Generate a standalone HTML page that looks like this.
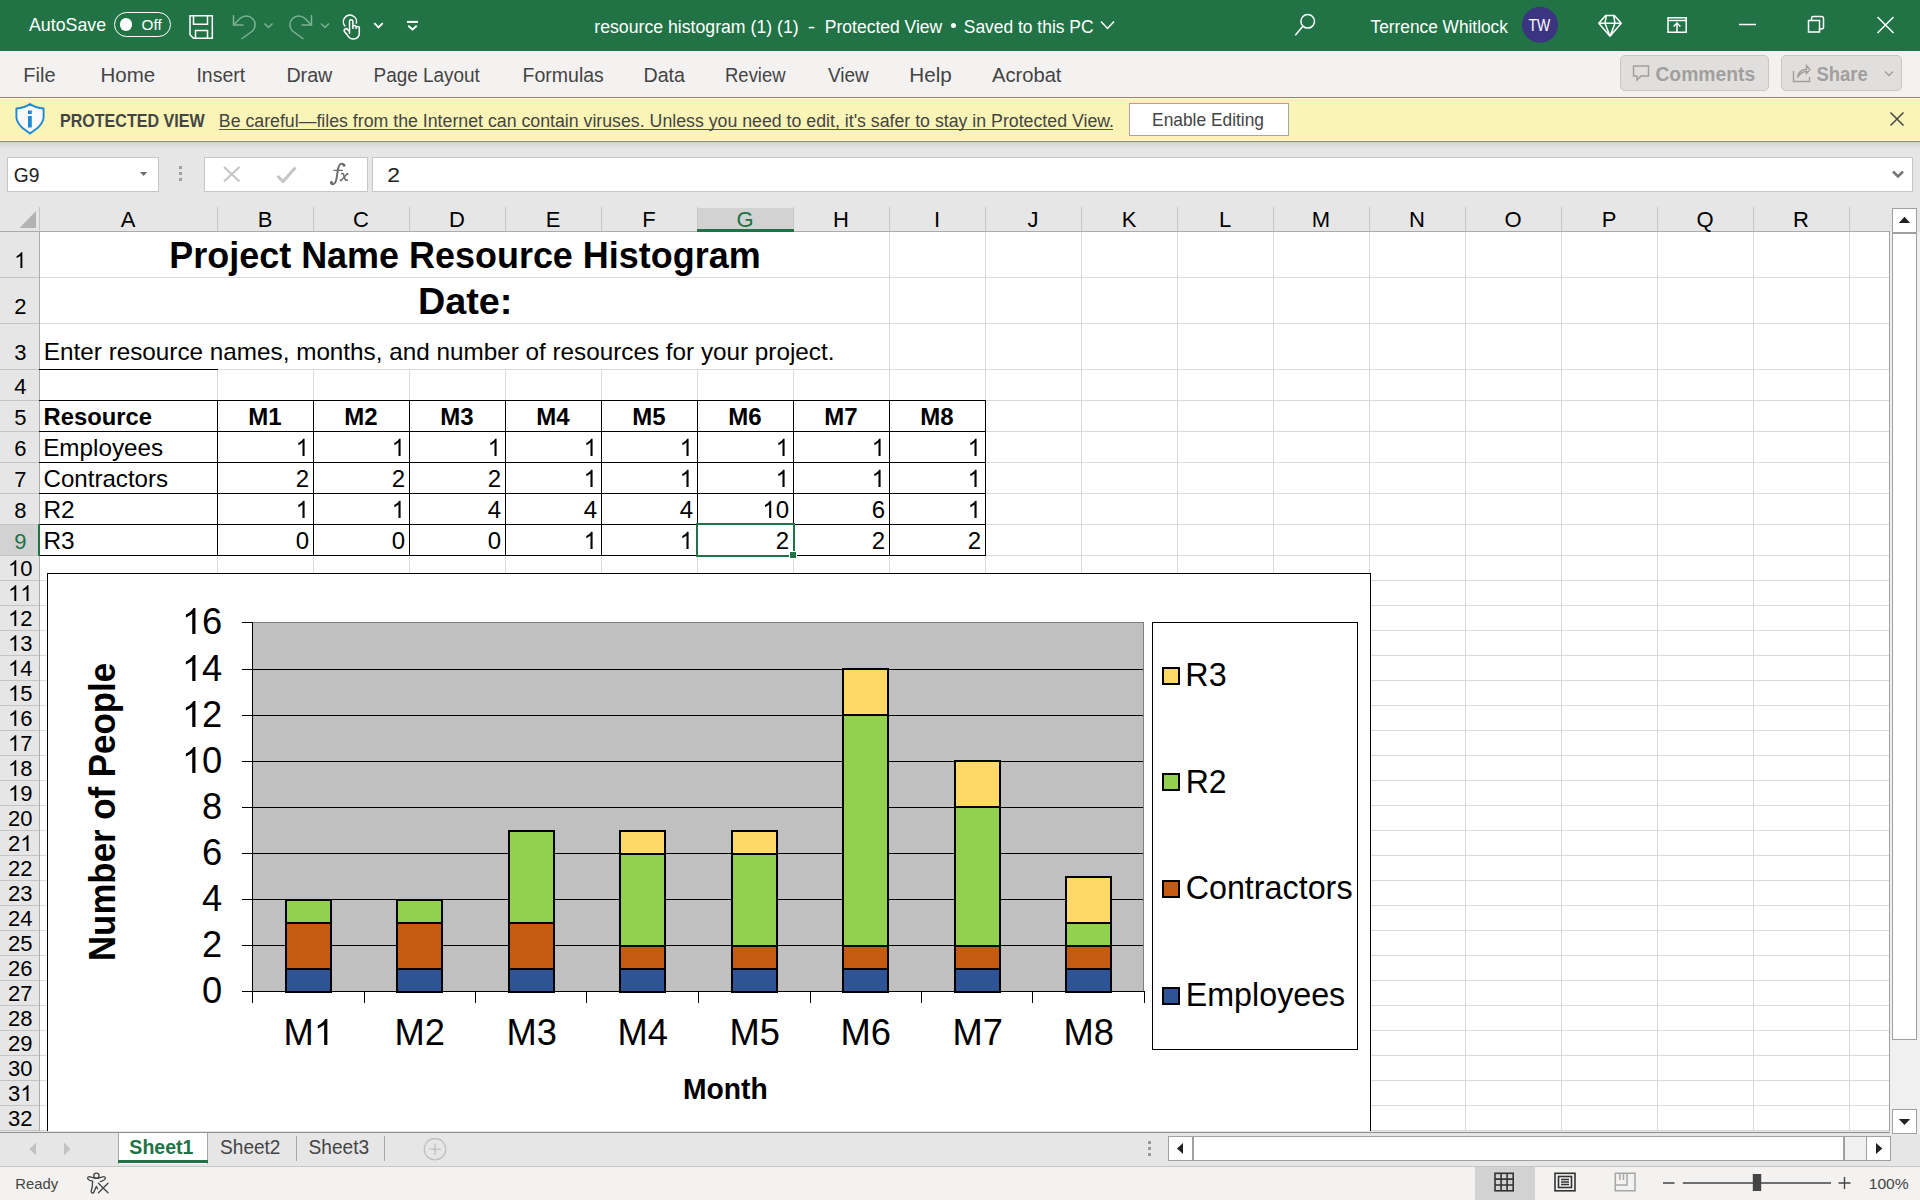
<!DOCTYPE html><html><head><meta charset="utf-8"><title>resource histogram</title><style>*{margin:0;padding:0;box-sizing:border-box}
html,body{width:1920px;height:1200px;overflow:hidden;background:#fff;font-family:"Liberation Sans",sans-serif}
.a{position:absolute}
svg text{font-family:"Liberation Sans",sans-serif}</style></head><body>
<div class="a" style="left:0;top:0;width:1920px;height:51px;background:#217346"></div>
<div class="a" style="left:114px;top:12px;width:57px;height:25px;border:1.3px solid #fff;border-radius:13px"></div>
<div class="a" style="left:119.5px;top:18px;width:12.5px;height:12.5px;background:#fff;border-radius:50%"></div>
<svg class="a" style="left:0;top:0" width="440" height="51" viewBox="0 0 440 51">
<g fill="none" stroke="#fff" stroke-width="1.5">
<path d="M190 15.7 H212.3 V38.3 H193.5 L190 34.8 Z"/>
<path d="M193.5 15.7 V24.3 H207.5 V15.7"/>
<path d="M195.5 38.3 V30.5 H207.5 V38.3"/>
</g>
<g fill="none" stroke="#7db393" stroke-width="1.5">
<path d="M233.5 15 V25 H243.5"/><path d="M233.5 25 L240 18.5 A8.8 8.8 0 0 1 252.5 31 L241.5 39"/>
<path d="M264.5 23.5 L268.5 27.5 L272.5 23.5"/>
<path d="M311.5 15 V25 H301.5"/><path d="M311.5 25 L305 18.5 A8.8 8.8 0 0 0 292.5 31 L303.5 39"/>
<path d="M321 23.5 L325 27.5 L329 23.5"/>
</g>
<g fill="none" stroke="#fff" stroke-width="1.5">
<path d="M345.3 26.4 A6.6 6.6 0 1 1 356.3 23.6"/>
<path d="M349.5 34 V21.5 A1.7 1.7 0 0 1 352.9 21.5 V29 M352.9 27 A1.6 1.6 0 0 1 356.1 27 V29 M356.1 28 A1.6 1.6 0 0 1 359.3 28 V33.5 A5.5 5.5 0 0 1 353.8 39 A6 6 0 0 1 348 36 L344.5 31.5 A1.6 1.6 0 0 1 347.5 29.5 L349.5 31.5"/>
<path d="M374.3 23.2 L378.5 27.4 L382.7 23.2" stroke-width="1.9"/>
<path d="M407 21.9 H418" stroke-width="2"/><path d="M408.3 25.7 L412.5 29.5 L416.7 25.7" stroke-width="1.9"/>
</g>
</svg>
<div class="a" style="left:951.3px;top:22.8px;width:5px;height:5px;background:#fff;border-radius:50%"></div>
<svg class="a" style="left:1090px;top:0" width="830" height="51" viewBox="1090 0 830 51">
<g fill="none" stroke="#fff" stroke-width="1.5">
<path d="M1101 21.5 L1107.5 28.5 L1114 21.5"/>
<circle cx="1307.7" cy="21.3" r="6.8"/><path d="M1302.8 26.3 L1295.3 35.3"/>
<path d="M1598.8 23.2 L1605.6 15.6 H1614.4 L1621.2 23.2 L1610 36.3 Z M1598.8 23.2 H1621.2 M1606.3 15.6 L1605 23.2 L1610 36.3 L1615 23.2 L1613.7 15.6" stroke-linejoin="round"/>
<path d="M1668 17.8 H1686.2 V32.2 H1668 Z M1668 20.5 H1686.2 M1677 32 V23.2 M1673.6 26.5 L1677 23 L1680.4 26.5"/>
<path d="M1739 24.5 H1756"/>
<path d="M1808.5 20.5 H1819.5 V32 H1808.5 Z M1811.5 20.5 V18.5 A2 2 0 0 1 1813.5 16.5 H1821.5 A2 2 0 0 1 1823.5 18.5 V27 A2 2 0 0 1 1821.5 29 H1819.5"/>
<path d="M1877.5 17 L1893.5 33 M1893.5 17 L1877.5 33"/>
</g>
<circle cx="1540" cy="24.8" r="18" fill="#3b3480"/>
</svg>
<div class="a" style="left:0;top:51px;width:1920px;height:46px;background:#f3f2f1"></div>
<div class="a" style="left:1620px;top:55px;width:149px;height:36px;border:1px solid #c8c6c4;border-radius:5px;background:#e1dfdd"></div>
<div class="a" style="left:1781px;top:55px;width:121px;height:36px;border:1px solid #c8c6c4;border-radius:5px;background:#e1dfdd"></div>
<svg class="a" style="left:1620px;top:51px" width="300" height="46" viewBox="1620 51 300 46">
<g fill="none" stroke="#a19f9d" stroke-width="1.4">
<path d="M1633.5 66 H1648.5 V76 H1641 L1637 80 V76 H1633.5 Z"/>
<path d="M1793.5 71 V81.5 H1809.5 V77 M1797.5 77.5 Q1799 69.5 1805.5 69.5 H1806.5 V65.5 L1810 69.5 L1806.5 73.5 V71.5 Q1801 71.5 1797.5 77.5"/>
<path d="M1885 71.5 L1889 75.5 L1893 71.5"/>
</g></svg>
<div class="a" style="left:0;top:97px;width:1920px;height:45px;background:#faf5b7;border-top:1px solid #b48c06;border-bottom:1px solid #b48c06;box-shadow:inset 0 1px #fffbca,inset 0 -1px #fffbca"></div>
<svg class="a" style="left:10px;top:100px" width="40" height="40" viewBox="10 100 40 40">
<path d="M30 104 Q32.5 105.8 36 107 Q40 108.2 43.6 108.5 V117.5 Q43.2 122.5 37.5 128 L30 133.6 L22.5 128 Q16.8 122.5 16.4 117.5 V108.5 Q20 108.2 24 107 Q27.5 105.8 30 104 Z" fill="#f9f9fb" stroke="#1e88d4" stroke-width="1.9" stroke-linejoin="round"/>
<rect x="28" y="110.5" width="3.8" height="3.6" fill="#1e8ad6"/><rect x="28" y="116" width="3.8" height="11.5" fill="#1e8ad6"/>
</svg>
<div class="a" style="left:219px;top:128.5px;width:894px;height:1.3px;background:#555"></div>
<div class="a" style="left:1129px;top:103px;width:160px;height:33px;background:#fff;border:1px solid #a6a6a6"></div>
<svg class="a" style="left:1880px;top:104px" width="30" height="30" viewBox="1880 104 30 30"><path d="M1890.5 112.5 L1903.5 125.5 M1903.5 112.5 L1890.5 125.5" stroke="#444" stroke-width="1.5"/></svg>
<div class="a" style="left:0;top:142px;width:1920px;height:90px;background:#e6e6e6"></div>
<div class="a" style="left:0;top:142px;width:1920px;height:7px;background:linear-gradient(#d2d2d6,#e6e6e6)"></div>
<div class="a" style="left:7px;top:157px;width:152px;height:35px;background:#fff;border:1px solid #c6c6c6"></div>
<svg class="a" style="left:136px;top:168px" width="16" height="10" viewBox="136 168 16 10"><path d="M140 172 H147.2 L143.6 175.9 Z" fill="#6e6e6e"/></svg>
<div class="a" style="left:179px;top:166px;width:3px;height:3px;background:#a0a0a0"></div>
<div class="a" style="left:179px;top:172px;width:3px;height:3px;background:#a0a0a0"></div>
<div class="a" style="left:179px;top:178px;width:3px;height:3px;background:#a0a0a0"></div>
<div class="a" style="left:204px;top:157px;width:164px;height:35px;background:#fff;border:1px solid #c6c6c6"></div>
<svg class="a" style="left:204px;top:157px" width="164" height="35" viewBox="204 157 164 35"><path d="M224 167 L239.5 181.5 M239.5 167 L224 181.5" stroke="#c6c6c6" stroke-width="2.2"/><path d="M277.5 176 L283 181.5 L295.5 167.5" fill="none" stroke="#c6c6c6" stroke-width="3"/></svg>
<svg class="a" style="left:326px;top:158px" width="28" height="32" viewBox="326 158 28 32">
<g fill="none" stroke="#6b6b6b" stroke-linecap="round">
<path d="M344.6 165.3 Q343.2 163.3 341 163.9 Q338.7 164.9 338 169.5 L336.4 179.2 Q335.5 184.2 332.4 184.3 Q330.9 184.1 331.1 182.6" stroke-width="1.9"/>
<path d="M334 170.4 H342.4" stroke-width="1.3"/>
<path d="M341.9 173.6 Q343.6 173.1 344.1 176 L344.9 178.9 Q345.6 180.9 347.4 180" stroke-width="1.6"/>
<path d="M347.3 173.8 L341 180.5" stroke-width="1.3"/>
</g>
<g fill="#6b6b6b"><circle cx="343.9" cy="165.5" r="1.35"/><circle cx="331.5" cy="182.4" r="1.45"/><circle cx="347.5" cy="174" r="1.05"/><circle cx="340.8" cy="180.3" r="1.05"/></g>
</svg>
<div class="a" style="left:372px;top:157px;width:1541px;height:35px;background:#fff;border:1px solid #c6c6c6"></div>
<svg class="a" style="left:1888px;top:166px" width="20" height="16" viewBox="1888 166 20 16"><path d="M1893 171.5 L1898 176.5 L1903 171.5" fill="none" stroke="#777" stroke-width="2.6"/></svg>
<div class="a" style="left:0;top:207px;width:1920px;height:25px;background:#e6e6e6"></div>
<svg class="a" style="left:0;top:207px" width="40" height="25" viewBox="0 207 40 25"><path d="M19.5 228 H36 V211 Z" fill="#b3b3b3"/></svg>
<div class="a" style="left:698px;top:208px;width:95px;height:24px;background:#d2d2d2"></div>
<svg class="a" style="left:0;top:207px" width="1889" height="25" viewBox="0 207 1889 25"><rect x="39" y="207" width="1" height="25" fill="#c6c6c6"/><rect x="217" y="207" width="1" height="25" fill="#c6c6c6"/><rect x="313" y="207" width="1" height="25" fill="#c6c6c6"/><rect x="409" y="207" width="1" height="25" fill="#c6c6c6"/><rect x="505" y="207" width="1" height="25" fill="#c6c6c6"/><rect x="601" y="207" width="1" height="25" fill="#c6c6c6"/><rect x="697" y="207" width="1" height="25" fill="#c6c6c6"/><rect x="793" y="207" width="1" height="25" fill="#c6c6c6"/><rect x="889" y="207" width="1" height="25" fill="#c6c6c6"/><rect x="985" y="207" width="1" height="25" fill="#c6c6c6"/><rect x="1081" y="207" width="1" height="25" fill="#c6c6c6"/><rect x="1177" y="207" width="1" height="25" fill="#c6c6c6"/><rect x="1273" y="207" width="1" height="25" fill="#c6c6c6"/><rect x="1369" y="207" width="1" height="25" fill="#c6c6c6"/><rect x="1465" y="207" width="1" height="25" fill="#c6c6c6"/><rect x="1561" y="207" width="1" height="25" fill="#c6c6c6"/><rect x="1657" y="207" width="1" height="25" fill="#c6c6c6"/><rect x="1753" y="207" width="1" height="25" fill="#c6c6c6"/><rect x="1849" y="207" width="1" height="25" fill="#c6c6c6"/><rect x="0" y="231" width="1889" height="1" fill="#ababab"/><rect x="697" y="229" width="97" height="3" fill="#217346"/></svg>
<div class="a" style="left:0;top:232px;width:39px;height:899px;background:#e6e6e6"></div>
<div class="a" style="left:0;top:525px;width:39px;height:30px;background:#d2d2d2"></div>
<svg class="a" style="left:0;top:0" width="1889" height="1131" viewBox="0 0 1889 1131"><rect x="217" y="370" width="1" height="761" fill="#dadada"/><rect x="313" y="370" width="1" height="761" fill="#dadada"/><rect x="409" y="370" width="1" height="761" fill="#dadada"/><rect x="505" y="370" width="1" height="761" fill="#dadada"/><rect x="601" y="370" width="1" height="761" fill="#dadada"/><rect x="697" y="370" width="1" height="761" fill="#dadada"/><rect x="793" y="370" width="1" height="761" fill="#dadada"/><rect x="889" y="232" width="1" height="899" fill="#dadada"/><rect x="985" y="232" width="1" height="899" fill="#dadada"/><rect x="1081" y="232" width="1" height="899" fill="#dadada"/><rect x="1177" y="232" width="1" height="899" fill="#dadada"/><rect x="1273" y="232" width="1" height="899" fill="#dadada"/><rect x="1369" y="232" width="1" height="899" fill="#dadada"/><rect x="1465" y="232" width="1" height="899" fill="#dadada"/><rect x="1561" y="232" width="1" height="899" fill="#dadada"/><rect x="1657" y="232" width="1" height="899" fill="#dadada"/><rect x="1753" y="232" width="1" height="899" fill="#dadada"/><rect x="1849" y="232" width="1" height="899" fill="#dadada"/><rect x="40" y="277" width="1849" height="1" fill="#dadada"/><rect x="0" y="277" width="39" height="1" fill="#c4c4c4"/><rect x="40" y="323" width="1849" height="1" fill="#dadada"/><rect x="0" y="323" width="39" height="1" fill="#c4c4c4"/><rect x="40" y="369" width="1849" height="1" fill="#dadada"/><rect x="0" y="369" width="39" height="1" fill="#c4c4c4"/><rect x="40" y="400" width="1849" height="1" fill="#dadada"/><rect x="0" y="400" width="39" height="1" fill="#c4c4c4"/><rect x="40" y="431" width="1849" height="1" fill="#dadada"/><rect x="0" y="431" width="39" height="1" fill="#c4c4c4"/><rect x="40" y="462" width="1849" height="1" fill="#dadada"/><rect x="0" y="462" width="39" height="1" fill="#c4c4c4"/><rect x="40" y="493" width="1849" height="1" fill="#dadada"/><rect x="0" y="493" width="39" height="1" fill="#c4c4c4"/><rect x="40" y="524" width="1849" height="1" fill="#dadada"/><rect x="0" y="524" width="39" height="1" fill="#c4c4c4"/><rect x="40" y="555" width="1849" height="1" fill="#dadada"/><rect x="0" y="555" width="39" height="1" fill="#c4c4c4"/><rect x="40" y="580" width="1849" height="1" fill="#dadada"/><rect x="0" y="580" width="39" height="1" fill="#c4c4c4"/><rect x="40" y="605" width="1849" height="1" fill="#dadada"/><rect x="0" y="605" width="39" height="1" fill="#c4c4c4"/><rect x="40" y="630" width="1849" height="1" fill="#dadada"/><rect x="0" y="630" width="39" height="1" fill="#c4c4c4"/><rect x="40" y="655" width="1849" height="1" fill="#dadada"/><rect x="0" y="655" width="39" height="1" fill="#c4c4c4"/><rect x="40" y="680" width="1849" height="1" fill="#dadada"/><rect x="0" y="680" width="39" height="1" fill="#c4c4c4"/><rect x="40" y="705" width="1849" height="1" fill="#dadada"/><rect x="0" y="705" width="39" height="1" fill="#c4c4c4"/><rect x="40" y="730" width="1849" height="1" fill="#dadada"/><rect x="0" y="730" width="39" height="1" fill="#c4c4c4"/><rect x="40" y="755" width="1849" height="1" fill="#dadada"/><rect x="0" y="755" width="39" height="1" fill="#c4c4c4"/><rect x="40" y="780" width="1849" height="1" fill="#dadada"/><rect x="0" y="780" width="39" height="1" fill="#c4c4c4"/><rect x="40" y="805" width="1849" height="1" fill="#dadada"/><rect x="0" y="805" width="39" height="1" fill="#c4c4c4"/><rect x="40" y="830" width="1849" height="1" fill="#dadada"/><rect x="0" y="830" width="39" height="1" fill="#c4c4c4"/><rect x="40" y="855" width="1849" height="1" fill="#dadada"/><rect x="0" y="855" width="39" height="1" fill="#c4c4c4"/><rect x="40" y="880" width="1849" height="1" fill="#dadada"/><rect x="0" y="880" width="39" height="1" fill="#c4c4c4"/><rect x="40" y="905" width="1849" height="1" fill="#dadada"/><rect x="0" y="905" width="39" height="1" fill="#c4c4c4"/><rect x="40" y="930" width="1849" height="1" fill="#dadada"/><rect x="0" y="930" width="39" height="1" fill="#c4c4c4"/><rect x="40" y="955" width="1849" height="1" fill="#dadada"/><rect x="0" y="955" width="39" height="1" fill="#c4c4c4"/><rect x="40" y="980" width="1849" height="1" fill="#dadada"/><rect x="0" y="980" width="39" height="1" fill="#c4c4c4"/><rect x="40" y="1005" width="1849" height="1" fill="#dadada"/><rect x="0" y="1005" width="39" height="1" fill="#c4c4c4"/><rect x="40" y="1030" width="1849" height="1" fill="#dadada"/><rect x="0" y="1030" width="39" height="1" fill="#c4c4c4"/><rect x="40" y="1055" width="1849" height="1" fill="#dadada"/><rect x="0" y="1055" width="39" height="1" fill="#c4c4c4"/><rect x="40" y="1080" width="1849" height="1" fill="#dadada"/><rect x="0" y="1080" width="39" height="1" fill="#c4c4c4"/><rect x="40" y="1105" width="1849" height="1" fill="#dadada"/><rect x="0" y="1105" width="39" height="1" fill="#c4c4c4"/><rect x="40" y="1130" width="1849" height="1" fill="#dadada"/><rect x="0" y="1130" width="39" height="1" fill="#c4c4c4"/><rect x="39" y="232" width="1" height="899" fill="#ababab"/><rect x="39" y="400" width="947" height="1" fill="#000"/><rect x="39" y="431" width="947" height="1" fill="#000"/><rect x="39" y="462" width="947" height="1" fill="#000"/><rect x="39" y="493" width="947" height="1" fill="#000"/><rect x="39" y="524" width="947" height="1" fill="#000"/><rect x="39" y="555" width="947" height="1" fill="#000"/><rect x="39" y="369" width="179" height="1" fill="#000"/><rect x="217" y="400" width="1" height="156" fill="#000"/><rect x="313" y="400" width="1" height="156" fill="#000"/><rect x="409" y="400" width="1" height="156" fill="#000"/><rect x="505" y="400" width="1" height="156" fill="#000"/><rect x="601" y="400" width="1" height="156" fill="#000"/><rect x="697" y="400" width="1" height="156" fill="#000"/><rect x="793" y="400" width="1" height="156" fill="#000"/><rect x="889" y="400" width="1" height="156" fill="#000"/><rect x="985" y="400" width="1" height="156" fill="#000"/><rect x="38" y="524" width="2" height="32" fill="#217346"/></svg>
<div class="a" style="left:696px;top:523px;width:99px;height:34px;border:2px solid #217346"></div>
<div class="a" style="left:789px;top:551px;width:8px;height:8px;background:#fff"></div>
<div class="a" style="left:790px;top:552px;width:6px;height:6px;background:#217346"></div>
<div class="a" style="left:797px;top:555px;width:189px;height:1px;background:#000"></div>
<svg class="a" style="left:0;top:0" width="1889" height="1131" viewBox="0 0 1889 1131" shape-rendering="crispEdges"><rect x="47" y="573" width="1324" height="620" fill="#000"/><rect x="48" y="574" width="1322" height="620" fill="#fff"/><rect x="253" y="622" width="891" height="369" fill="#c0c0c0"/><rect x="253" y="622" width="891" height="1" fill="#7f7f7f"/><rect x="1143" y="622" width="1" height="369" fill="#7f7f7f"/><rect x="253" y="945" width="890" height="1" fill="#000"/><rect x="253" y="899" width="890" height="1" fill="#000"/><rect x="253" y="853" width="890" height="1" fill="#000"/><rect x="253" y="807" width="890" height="1" fill="#000"/><rect x="253" y="761" width="890" height="1" fill="#000"/><rect x="253" y="715" width="890" height="1" fill="#000"/><rect x="253" y="669" width="890" height="1" fill="#000"/><rect x="242" y="991" width="10" height="1" fill="#000"/><rect x="242" y="945" width="10" height="1" fill="#000"/><rect x="242" y="899" width="10" height="1" fill="#000"/><rect x="242" y="853" width="10" height="1" fill="#000"/><rect x="242" y="807" width="10" height="1" fill="#000"/><rect x="242" y="761" width="10" height="1" fill="#000"/><rect x="242" y="715" width="10" height="1" fill="#000"/><rect x="242" y="669" width="10" height="1" fill="#000"/><rect x="242" y="622" width="10" height="1" fill="#000"/><rect x="252" y="622" width="1" height="381" fill="#000"/><rect x="252" y="991" width="893" height="1" fill="#000"/><rect x="364" y="991" width="1" height="12" fill="#000"/><rect x="475" y="991" width="1" height="12" fill="#000"/><rect x="586" y="991" width="1" height="12" fill="#000"/><rect x="698" y="991" width="1" height="12" fill="#000"/><rect x="810" y="991" width="1" height="12" fill="#000"/><rect x="921" y="991" width="1" height="12" fill="#000"/><rect x="1032" y="991" width="1" height="12" fill="#000"/><rect x="1144" y="991" width="1" height="12" fill="#000"/><rect x="285" y="968" width="47" height="25" fill="#000"/><rect x="287" y="970" width="43" height="21" fill="#2f5496"/><rect x="285" y="922" width="47" height="48" fill="#000"/><rect x="287" y="924" width="43" height="44" fill="#c55a11"/><rect x="285" y="899" width="47" height="25" fill="#000"/><rect x="287" y="901" width="43" height="21" fill="#92d050"/><rect x="396" y="968" width="47" height="25" fill="#000"/><rect x="398" y="970" width="43" height="21" fill="#2f5496"/><rect x="396" y="922" width="47" height="48" fill="#000"/><rect x="398" y="924" width="43" height="44" fill="#c55a11"/><rect x="396" y="899" width="47" height="25" fill="#000"/><rect x="398" y="901" width="43" height="21" fill="#92d050"/><rect x="508" y="968" width="47" height="25" fill="#000"/><rect x="510" y="970" width="43" height="21" fill="#2f5496"/><rect x="508" y="922" width="47" height="48" fill="#000"/><rect x="510" y="924" width="43" height="44" fill="#c55a11"/><rect x="508" y="830" width="47" height="94" fill="#000"/><rect x="510" y="832" width="43" height="90" fill="#92d050"/><rect x="619" y="968" width="47" height="25" fill="#000"/><rect x="621" y="970" width="43" height="21" fill="#2f5496"/><rect x="619" y="945" width="47" height="25" fill="#000"/><rect x="621" y="947" width="43" height="21" fill="#c55a11"/><rect x="619" y="853" width="47" height="94" fill="#000"/><rect x="621" y="855" width="43" height="90" fill="#92d050"/><rect x="619" y="830" width="47" height="25" fill="#000"/><rect x="621" y="832" width="43" height="21" fill="#ffd966"/><rect x="731" y="968" width="47" height="25" fill="#000"/><rect x="733" y="970" width="43" height="21" fill="#2f5496"/><rect x="731" y="945" width="47" height="25" fill="#000"/><rect x="733" y="947" width="43" height="21" fill="#c55a11"/><rect x="731" y="853" width="47" height="94" fill="#000"/><rect x="733" y="855" width="43" height="90" fill="#92d050"/><rect x="731" y="830" width="47" height="25" fill="#000"/><rect x="733" y="832" width="43" height="21" fill="#ffd966"/><rect x="842" y="968" width="47" height="25" fill="#000"/><rect x="844" y="970" width="43" height="21" fill="#2f5496"/><rect x="842" y="945" width="47" height="25" fill="#000"/><rect x="844" y="947" width="43" height="21" fill="#c55a11"/><rect x="842" y="714" width="47" height="233" fill="#000"/><rect x="844" y="716" width="43" height="229" fill="#92d050"/><rect x="842" y="668" width="47" height="48" fill="#000"/><rect x="844" y="670" width="43" height="44" fill="#ffd966"/><rect x="954" y="968" width="47" height="25" fill="#000"/><rect x="956" y="970" width="43" height="21" fill="#2f5496"/><rect x="954" y="945" width="47" height="25" fill="#000"/><rect x="956" y="947" width="43" height="21" fill="#c55a11"/><rect x="954" y="806" width="47" height="141" fill="#000"/><rect x="956" y="808" width="43" height="137" fill="#92d050"/><rect x="954" y="760" width="47" height="48" fill="#000"/><rect x="956" y="762" width="43" height="44" fill="#ffd966"/><rect x="1065" y="968" width="47" height="25" fill="#000"/><rect x="1067" y="970" width="43" height="21" fill="#2f5496"/><rect x="1065" y="945" width="47" height="25" fill="#000"/><rect x="1067" y="947" width="43" height="21" fill="#c55a11"/><rect x="1065" y="922" width="47" height="25" fill="#000"/><rect x="1067" y="924" width="43" height="21" fill="#92d050"/><rect x="1065" y="876" width="47" height="48" fill="#000"/><rect x="1067" y="878" width="43" height="44" fill="#ffd966"/><rect x="1152" y="622" width="206" height="428" fill="#000"/><rect x="1153" y="623" width="204" height="426" fill="#fff"/><rect x="1162" y="667" width="18" height="18" fill="#000"/><rect x="1164" y="669" width="14" height="14" fill="#ffd966"/><rect x="1162" y="773" width="18" height="18" fill="#000"/><rect x="1164" y="775" width="14" height="14" fill="#92d050"/><rect x="1162" y="880" width="18" height="18" fill="#000"/><rect x="1164" y="882" width="14" height="14" fill="#c55a11"/><rect x="1162" y="987" width="18" height="18" fill="#000"/><rect x="1164" y="989" width="14" height="14" fill="#2f5496"/></svg>
<div class="a" style="left:1889px;top:207px;width:31px;height:25px;background:#e6e6e6"></div>
<div class="a" style="left:1889px;top:232px;width:31px;height:900px;background:#f0f0f0"></div>
<div class="a" style="left:1889px;top:231px;width:1px;height:901px;background:#a0a0a0"></div>
<div class="a" style="left:1892px;top:208px;width:25px;height:26px;background:#fff;border:1px solid #a0a0a0;border-bottom:2px solid #a0a0a0"></div>
<svg class="a" style="left:1892px;top:208px" width="25" height="25" viewBox="1892 208 25 25"><path d="M1898.8 223 H1910.2 L1904.5 216.8 Z" fill="#222"/></svg>
<div class="a" style="left:1892px;top:233px;width:25px;height:807px;background:#fff;border:1px solid #a0a0a0"></div>
<div class="a" style="left:1892px;top:1109px;width:25px;height:25px;background:#fff;border:1px solid #a0a0a0"></div>
<svg class="a" style="left:1892px;top:1109px" width="25" height="25" viewBox="1892 1109 25 25"><path d="M1898.8 1119 H1910.2 L1904.5 1125 Z" fill="#222"/></svg>
<div class="a" style="left:0;top:1131px;width:1920px;height:36px;background:#e6e6e6;border-bottom:1px solid #c6c6c6"></div>
<div class="a" style="left:0;top:1132px;width:1890px;height:1px;background:#909090"></div>
<div class="a" style="left:1890px;top:1131px;width:30px;height:3px;background:#f0f0f0"></div>
<div class="a" style="left:1892px;top:1109px;width:25px;height:25px;background:#fff;border:1px solid #a0a0a0"></div>
<svg class="a" style="left:1892px;top:1109px" width="25" height="25" viewBox="1892 1109 25 25"><path d="M1898.8 1119 H1910.2 L1904.5 1125 Z" fill="#222"/></svg>
<svg class="a" style="left:0;top:1131px" width="100" height="35" viewBox="0 1131 100 35"><path d="M36 1142.5 L29.5 1149 L36 1155.5 Z" fill="#c2c2c2"/><path d="M64 1142.5 L70.5 1149 L64 1155.5 Z" fill="#c2c2c2"/></svg>
<div class="a" style="left:118px;top:1133px;width:90px;height:31px;background:#fff;border-left:1px solid #a8a8a8;border-right:1px solid #a8a8a8"></div>
<div class="a" style="left:118px;top:1160px;width:90px;height:3px;background:#217346"></div>
<div class="a" style="left:296px;top:1136px;width:1px;height:25px;background:#a6a6a6"></div>
<div class="a" style="left:384px;top:1136px;width:1px;height:25px;background:#a6a6a6"></div>
<svg class="a" style="left:420px;top:1134px" width="30" height="30"><circle cx="15" cy="15.2" r="10.7" fill="none" stroke="#c0c0c0" stroke-width="1.3"/><path d="M15 9.5 V21 M9.3 15.2 H20.7" stroke="#c0c0c0" stroke-width="1.3"/></svg>
<div class="a" style="left:1148px;top:1141px;width:3px;height:3px;background:#9a9a9a"></div>
<div class="a" style="left:1148px;top:1147px;width:3px;height:3px;background:#9a9a9a"></div>
<div class="a" style="left:1148px;top:1153px;width:3px;height:3px;background:#9a9a9a"></div>
<div class="a" style="left:1168px;top:1136px;width:722px;height:25px;background:#fff;border:1px solid #a0a0a0"></div>
<div class="a" style="left:1192px;top:1136px;width:2px;height:25px;background:#a0a0a0"></div>
<div class="a" style="left:1843px;top:1136px;width:2px;height:25px;background:#a0a0a0"></div>
<div class="a" style="left:1845px;top:1137px;width:21px;height:23px;background:#f0f0f0"></div>
<div class="a" style="left:1866px;top:1136px;width:25px;height:25px;background:#fff;border:1px solid #a0a0a0"></div>
<svg class="a" style="left:1168px;top:1136px" width="25" height="25" viewBox="1168 1136 25 25"><path d="M1183 1143 V1154 L1177 1148.5 Z" fill="#222"/></svg>
<svg class="a" style="left:1866px;top:1136px" width="25" height="25" viewBox="1866 1136 25 25"><path d="M1876 1143 V1154 L1882.3 1148.5 Z" fill="#222"/></svg>
<div class="a" style="left:0;top:1167px;width:1920px;height:33px;background:#f3f2f1"></div>
<svg class="a" style="left:80px;top:1166px" width="40" height="34" viewBox="80 1166 40 34">
<g fill="none" stroke="#444" stroke-width="1.35" stroke-linecap="round" stroke-linejoin="round">
<circle cx="96.4" cy="1175.7" r="2.6"/>
<path d="M100.3 1181.6 Q104.8 1180.2 105.3 1178.6 Q105.6 1176.2 102.8 1176.8 L99.2 1177.9 Q96.4 1178.9 93.6 1177.9 L90.2 1176.8 Q87.5 1176.4 87.7 1178.6 Q88.3 1180.3 92.6 1181.2 L92.3 1186.8 Q91.2 1190.5 91.2 1191.8 Q91.8 1193.6 93.6 1192.8 L96.3 1186.4 L97.6 1188.8"/>
<path d="M98.4 1183.3 L108 1192.8 M108 1183.3 L98.4 1192.8"/>
</g></svg>
<div class="a" style="left:1475px;top:1167px;width:60px;height:33px;background:#d2d2d2"></div>
<svg class="a" style="left:1470px;top:1166px" width="450" height="34" viewBox="1470 1166 450 34">
<g fill="none" stroke="#333" stroke-width="1.6">
<rect x="1495" y="1173.3" width="18.2" height="17.5"/><path d="M1501.1 1173.3 V1190.8 M1507.1 1173.3 V1190.8 M1495 1179.1 H1513.2 M1495 1185 H1513.2"/>
<rect x="1555" y="1173.3" width="20" height="17.5"/><rect x="1558.5" y="1176.5" width="13" height="11"/><path d="M1561 1179.5 H1569 M1561 1182 H1569 M1561 1184.5 H1569"/>
</g>
<g fill="none" stroke="#a6a6a6" stroke-width="1.5">
<path d="M1615.3 1173.3 H1635 V1190.8 H1615.3 Z M1615.3 1185 H1627 V1173.3 M1620 1173.3 V1180 M1623.5 1173.3 V1180"/>
</g>
<path d="M1663 1183 H1674.5 M1682.8 1183 H1831 M1838.5 1183 H1850.5 M1844.5 1177 V1189" stroke="#444" stroke-width="1.4"/>
<rect x="1752.8" y="1174" width="8.4" height="17" fill="#444"/>
</svg>
<svg class="a" style="left:0;top:0;pointer-events:none" width="1920" height="1200" viewBox="0 0 1920 1200"><text x="29.00" y="30.6" font-size="18" fill="#fff" textLength="77.05" lengthAdjust="spacingAndGlyphs">AutoSave</text><text x="141.52" y="30" font-size="14.5" fill="#fff" textLength="20.14" lengthAdjust="spacingAndGlyphs">Off</text><text x="594.32" y="32.5" font-size="18" fill="#fff" textLength="204.32" lengthAdjust="spacingAndGlyphs">resource histogram (1) (1)</text><text x="807.75" y="32.5" font-size="18" fill="#fff" textLength="7.50" lengthAdjust="spacingAndGlyphs">-</text><text x="824.83" y="32.5" font-size="18" fill="#fff" textLength="117.43" lengthAdjust="spacingAndGlyphs">Protected View</text><text x="963.78" y="32.5" font-size="18" fill="#fff" textLength="129.76" lengthAdjust="spacingAndGlyphs">Saved to this PC</text><text x="1370.50" y="32.7" font-size="18" fill="#fff" textLength="137.38" lengthAdjust="spacingAndGlyphs">Terrence Whitlock</text><text x="1528.40" y="31.1" font-size="16" fill="#fff" textLength="21.70" lengthAdjust="spacingAndGlyphs">TW</text><text x="23.37" y="82" font-size="20.5" fill="#444" textLength="32.14" lengthAdjust="spacingAndGlyphs">File</text><text x="100.50" y="82" font-size="20.5" fill="#444" textLength="54.69" lengthAdjust="spacingAndGlyphs">Home</text><text x="196.43" y="82" font-size="20.5" fill="#444" textLength="48.68" lengthAdjust="spacingAndGlyphs">Insert</text><text x="286.40" y="82" font-size="20.5" fill="#444" textLength="45.96" lengthAdjust="spacingAndGlyphs">Draw</text><text x="373.59" y="82" font-size="20.5" fill="#444" textLength="106.30" lengthAdjust="spacingAndGlyphs">Page Layout</text><text x="522.52" y="82" font-size="20.5" fill="#444" textLength="81.32" lengthAdjust="spacingAndGlyphs">Formulas</text><text x="643.50" y="82" font-size="20.5" fill="#444" textLength="41.52" lengthAdjust="spacingAndGlyphs">Data</text><text x="725.05" y="82" font-size="20.5" fill="#444" textLength="60.48" lengthAdjust="spacingAndGlyphs">Review</text><text x="827.94" y="82" font-size="20.5" fill="#444" textLength="40.84" lengthAdjust="spacingAndGlyphs">View</text><text x="909.28" y="82" font-size="20.5" fill="#444" textLength="42.48" lengthAdjust="spacingAndGlyphs">Help</text><text x="992.01" y="82" font-size="20.5" fill="#444" textLength="69.46" lengthAdjust="spacingAndGlyphs">Acrobat</text><text x="1655.41" y="80.5" font-size="19.5" font-weight="bold" fill="#a19f9d" textLength="99.84" lengthAdjust="spacingAndGlyphs">Comments</text><text x="1816.38" y="80.5" font-size="19.5" font-weight="bold" fill="#a19f9d" textLength="51.27" lengthAdjust="spacingAndGlyphs">Share</text><text x="59.91" y="127" font-size="18" font-weight="bold" fill="#444" textLength="144.68" lengthAdjust="spacingAndGlyphs">PROTECTED VIEW</text><text x="218.81" y="127" font-size="18" fill="#444" textLength="895.21" lengthAdjust="spacingAndGlyphs">Be careful—files from the Internet can contain viruses. Unless you need to edit, it's safer to stay in Protected View.</text><text x="1152.09" y="125.9" font-size="19" fill="#444" textLength="111.88" lengthAdjust="spacingAndGlyphs">Enable Editing</text><text x="13.79" y="182" font-size="20" fill="#222" textLength="25.62" lengthAdjust="spacingAndGlyphs">G9</text><text x="387.25" y="182" font-size="20" fill="#222" textLength="12.79" lengthAdjust="spacingAndGlyphs">2</text><text x="128.0" y="227.3" font-size="22" fill="#000" text-anchor="middle">A</text><text x="265.0" y="227.3" font-size="22" fill="#000" text-anchor="middle">B</text><text x="361.0" y="227.3" font-size="22" fill="#000" text-anchor="middle">C</text><text x="457.0" y="227.3" font-size="22" fill="#000" text-anchor="middle">D</text><text x="553.0" y="227.3" font-size="22" fill="#000" text-anchor="middle">E</text><text x="649.0" y="227.3" font-size="22" fill="#000" text-anchor="middle">F</text><text x="745.0" y="227.3" font-size="22" fill="#217346" text-anchor="middle">G</text><text x="841.0" y="227.3" font-size="22" fill="#000" text-anchor="middle">H</text><text x="937.0" y="227.3" font-size="22" fill="#000" text-anchor="middle">I</text><text x="1033.0" y="227.3" font-size="22" fill="#000" text-anchor="middle">J</text><text x="1129.0" y="227.3" font-size="22" fill="#000" text-anchor="middle">K</text><text x="1225.0" y="227.3" font-size="22" fill="#000" text-anchor="middle">L</text><text x="1321.0" y="227.3" font-size="22" fill="#000" text-anchor="middle">M</text><text x="1417.0" y="227.3" font-size="22" fill="#000" text-anchor="middle">N</text><text x="1513.0" y="227.3" font-size="22" fill="#000" text-anchor="middle">O</text><text x="1609.0" y="227.3" font-size="22" fill="#000" text-anchor="middle">P</text><text x="1705.0" y="227.3" font-size="22" fill="#000" text-anchor="middle">Q</text><text x="1801.0" y="227.3" font-size="22" fill="#000" text-anchor="middle">R</text><path transform="translate(14.18,268) scale(0.01074,-0.01074)" d="M763 0 H583 V1147 Q518 1085 412 1023 Q306 961 223 930 V1104 Q373 1175 486 1276 Q599 1377 646 1466 H763 Z" fill="#000"/><text x="14.18" y="314" font-size="22" fill="#000">2</text><text x="14.18" y="360" font-size="22" fill="#000">3</text><text x="14.18" y="394" font-size="22" fill="#000">4</text><text x="14.18" y="425" font-size="22" fill="#000">5</text><text x="14.18" y="456" font-size="22" fill="#000">6</text><text x="14.18" y="487" font-size="22" fill="#000">7</text><text x="14.18" y="518" font-size="22" fill="#000">8</text><text x="14.18" y="549" font-size="22" fill="#217346">9</text><path transform="translate(8.06,576) scale(0.01074,-0.01074)" d="M763 0 H583 V1147 Q518 1085 412 1023 Q306 961 223 930 V1104 Q373 1175 486 1276 Q599 1377 646 1466 H763 Z" fill="#000"/><text x="20.30" y="576" font-size="22" fill="#000">0</text><path transform="translate(8.06,601) scale(0.01074,-0.01074)" d="M763 0 H583 V1147 Q518 1085 412 1023 Q306 961 223 930 V1104 Q373 1175 486 1276 Q599 1377 646 1466 H763 Z" fill="#000"/><path transform="translate(20.30,601) scale(0.01074,-0.01074)" d="M763 0 H583 V1147 Q518 1085 412 1023 Q306 961 223 930 V1104 Q373 1175 486 1276 Q599 1377 646 1466 H763 Z" fill="#000"/><path transform="translate(8.06,626) scale(0.01074,-0.01074)" d="M763 0 H583 V1147 Q518 1085 412 1023 Q306 961 223 930 V1104 Q373 1175 486 1276 Q599 1377 646 1466 H763 Z" fill="#000"/><text x="20.30" y="626" font-size="22" fill="#000">2</text><path transform="translate(8.06,651) scale(0.01074,-0.01074)" d="M763 0 H583 V1147 Q518 1085 412 1023 Q306 961 223 930 V1104 Q373 1175 486 1276 Q599 1377 646 1466 H763 Z" fill="#000"/><text x="20.30" y="651" font-size="22" fill="#000">3</text><path transform="translate(8.06,676) scale(0.01074,-0.01074)" d="M763 0 H583 V1147 Q518 1085 412 1023 Q306 961 223 930 V1104 Q373 1175 486 1276 Q599 1377 646 1466 H763 Z" fill="#000"/><text x="20.30" y="676" font-size="22" fill="#000">4</text><path transform="translate(8.06,701) scale(0.01074,-0.01074)" d="M763 0 H583 V1147 Q518 1085 412 1023 Q306 961 223 930 V1104 Q373 1175 486 1276 Q599 1377 646 1466 H763 Z" fill="#000"/><text x="20.30" y="701" font-size="22" fill="#000">5</text><path transform="translate(8.06,726) scale(0.01074,-0.01074)" d="M763 0 H583 V1147 Q518 1085 412 1023 Q306 961 223 930 V1104 Q373 1175 486 1276 Q599 1377 646 1466 H763 Z" fill="#000"/><text x="20.30" y="726" font-size="22" fill="#000">6</text><path transform="translate(8.06,751) scale(0.01074,-0.01074)" d="M763 0 H583 V1147 Q518 1085 412 1023 Q306 961 223 930 V1104 Q373 1175 486 1276 Q599 1377 646 1466 H763 Z" fill="#000"/><text x="20.30" y="751" font-size="22" fill="#000">7</text><path transform="translate(8.06,776) scale(0.01074,-0.01074)" d="M763 0 H583 V1147 Q518 1085 412 1023 Q306 961 223 930 V1104 Q373 1175 486 1276 Q599 1377 646 1466 H763 Z" fill="#000"/><text x="20.30" y="776" font-size="22" fill="#000">8</text><path transform="translate(8.06,801) scale(0.01074,-0.01074)" d="M763 0 H583 V1147 Q518 1085 412 1023 Q306 961 223 930 V1104 Q373 1175 486 1276 Q599 1377 646 1466 H763 Z" fill="#000"/><text x="20.30" y="801" font-size="22" fill="#000">9</text><text x="8.06" y="826" font-size="22" fill="#000">2</text><text x="20.30" y="826" font-size="22" fill="#000">0</text><text x="8.06" y="851" font-size="22" fill="#000">2</text><path transform="translate(20.30,851) scale(0.01074,-0.01074)" d="M763 0 H583 V1147 Q518 1085 412 1023 Q306 961 223 930 V1104 Q373 1175 486 1276 Q599 1377 646 1466 H763 Z" fill="#000"/><text x="8.06" y="876" font-size="22" fill="#000">2</text><text x="20.30" y="876" font-size="22" fill="#000">2</text><text x="8.06" y="901" font-size="22" fill="#000">2</text><text x="20.30" y="901" font-size="22" fill="#000">3</text><text x="8.06" y="926" font-size="22" fill="#000">2</text><text x="20.30" y="926" font-size="22" fill="#000">4</text><text x="8.06" y="951" font-size="22" fill="#000">2</text><text x="20.30" y="951" font-size="22" fill="#000">5</text><text x="8.06" y="976" font-size="22" fill="#000">2</text><text x="20.30" y="976" font-size="22" fill="#000">6</text><text x="8.06" y="1001" font-size="22" fill="#000">2</text><text x="20.30" y="1001" font-size="22" fill="#000">7</text><text x="8.06" y="1026" font-size="22" fill="#000">2</text><text x="20.30" y="1026" font-size="22" fill="#000">8</text><text x="8.06" y="1051" font-size="22" fill="#000">2</text><text x="20.30" y="1051" font-size="22" fill="#000">9</text><text x="8.06" y="1076" font-size="22" fill="#000">3</text><text x="20.30" y="1076" font-size="22" fill="#000">0</text><text x="8.06" y="1101" font-size="22" fill="#000">3</text><path transform="translate(20.30,1101) scale(0.01074,-0.01074)" d="M763 0 H583 V1147 Q518 1085 412 1023 Q306 961 223 930 V1104 Q373 1175 486 1276 Q599 1377 646 1466 H763 Z" fill="#000"/><text x="8.06" y="1126" font-size="22" fill="#000">3</text><text x="20.30" y="1126" font-size="22" fill="#000">2</text><text x="169.30" y="268" font-size="36" font-weight="bold" fill="#000" textLength="591.33" lengthAdjust="spacingAndGlyphs">Project Name Resource Histogram</text><text x="417.90" y="314" font-size="36" font-weight="bold" fill="#000" textLength="94.55" lengthAdjust="spacingAndGlyphs">Date:</text><text x="43.88" y="360" font-size="24" fill="#000" textLength="790.59" lengthAdjust="spacingAndGlyphs">Enter resource names, months, and number of resources for your project.</text><text x="43.52" y="425" font-size="24" font-weight="bold" fill="#000" textLength="108.44" lengthAdjust="spacingAndGlyphs">Resource</text><text x="265.0" y="425" font-size="24" font-weight="bold" fill="#000" text-anchor="middle">M1</text><text x="361.0" y="425" font-size="24" font-weight="bold" fill="#000" text-anchor="middle">M2</text><text x="457.0" y="425" font-size="24" font-weight="bold" fill="#000" text-anchor="middle">M3</text><text x="553.0" y="425" font-size="24" font-weight="bold" fill="#000" text-anchor="middle">M4</text><text x="649.0" y="425" font-size="24" font-weight="bold" fill="#000" text-anchor="middle">M5</text><text x="745.0" y="425" font-size="24" font-weight="bold" fill="#000" text-anchor="middle">M6</text><text x="841.0" y="425" font-size="24" font-weight="bold" fill="#000" text-anchor="middle">M7</text><text x="937.0" y="425" font-size="24" font-weight="bold" fill="#000" text-anchor="middle">M8</text><text x="43.18" y="456" font-size="24" fill="#000" textLength="119.95" lengthAdjust="spacingAndGlyphs">Employees</text><path transform="translate(295.65,456) scale(0.01172,-0.01172)" d="M763 0 H583 V1147 Q518 1085 412 1023 Q306 961 223 930 V1104 Q373 1175 486 1276 Q599 1377 646 1466 H763 Z" fill="#000"/><path transform="translate(391.65,456) scale(0.01172,-0.01172)" d="M763 0 H583 V1147 Q518 1085 412 1023 Q306 961 223 930 V1104 Q373 1175 486 1276 Q599 1377 646 1466 H763 Z" fill="#000"/><path transform="translate(487.65,456) scale(0.01172,-0.01172)" d="M763 0 H583 V1147 Q518 1085 412 1023 Q306 961 223 930 V1104 Q373 1175 486 1276 Q599 1377 646 1466 H763 Z" fill="#000"/><path transform="translate(583.65,456) scale(0.01172,-0.01172)" d="M763 0 H583 V1147 Q518 1085 412 1023 Q306 961 223 930 V1104 Q373 1175 486 1276 Q599 1377 646 1466 H763 Z" fill="#000"/><path transform="translate(679.65,456) scale(0.01172,-0.01172)" d="M763 0 H583 V1147 Q518 1085 412 1023 Q306 961 223 930 V1104 Q373 1175 486 1276 Q599 1377 646 1466 H763 Z" fill="#000"/><path transform="translate(775.65,456) scale(0.01172,-0.01172)" d="M763 0 H583 V1147 Q518 1085 412 1023 Q306 961 223 930 V1104 Q373 1175 486 1276 Q599 1377 646 1466 H763 Z" fill="#000"/><path transform="translate(871.65,456) scale(0.01172,-0.01172)" d="M763 0 H583 V1147 Q518 1085 412 1023 Q306 961 223 930 V1104 Q373 1175 486 1276 Q599 1377 646 1466 H763 Z" fill="#000"/><path transform="translate(967.65,456) scale(0.01172,-0.01172)" d="M763 0 H583 V1147 Q518 1085 412 1023 Q306 961 223 930 V1104 Q373 1175 486 1276 Q599 1377 646 1466 H763 Z" fill="#000"/><text x="43.60" y="487" font-size="24" fill="#000" textLength="124.45" lengthAdjust="spacingAndGlyphs">Contractors</text><text x="295.65" y="487" font-size="24" fill="#000">2</text><text x="391.65" y="487" font-size="24" fill="#000">2</text><text x="487.65" y="487" font-size="24" fill="#000">2</text><path transform="translate(583.65,487) scale(0.01172,-0.01172)" d="M763 0 H583 V1147 Q518 1085 412 1023 Q306 961 223 930 V1104 Q373 1175 486 1276 Q599 1377 646 1466 H763 Z" fill="#000"/><path transform="translate(679.65,487) scale(0.01172,-0.01172)" d="M763 0 H583 V1147 Q518 1085 412 1023 Q306 961 223 930 V1104 Q373 1175 486 1276 Q599 1377 646 1466 H763 Z" fill="#000"/><path transform="translate(775.65,487) scale(0.01172,-0.01172)" d="M763 0 H583 V1147 Q518 1085 412 1023 Q306 961 223 930 V1104 Q373 1175 486 1276 Q599 1377 646 1466 H763 Z" fill="#000"/><path transform="translate(871.65,487) scale(0.01172,-0.01172)" d="M763 0 H583 V1147 Q518 1085 412 1023 Q306 961 223 930 V1104 Q373 1175 486 1276 Q599 1377 646 1466 H763 Z" fill="#000"/><path transform="translate(967.65,487) scale(0.01172,-0.01172)" d="M763 0 H583 V1147 Q518 1085 412 1023 Q306 961 223 930 V1104 Q373 1175 486 1276 Q599 1377 646 1466 H763 Z" fill="#000"/><text x="43.46" y="518" font-size="24" fill="#000" textLength="31.24" lengthAdjust="spacingAndGlyphs">R2</text><path transform="translate(295.65,518) scale(0.01172,-0.01172)" d="M763 0 H583 V1147 Q518 1085 412 1023 Q306 961 223 930 V1104 Q373 1175 486 1276 Q599 1377 646 1466 H763 Z" fill="#000"/><path transform="translate(391.65,518) scale(0.01172,-0.01172)" d="M763 0 H583 V1147 Q518 1085 412 1023 Q306 961 223 930 V1104 Q373 1175 486 1276 Q599 1377 646 1466 H763 Z" fill="#000"/><text x="487.65" y="518" font-size="24" fill="#000">4</text><text x="583.65" y="518" font-size="24" fill="#000">4</text><text x="679.65" y="518" font-size="24" fill="#000">4</text><path transform="translate(762.30,518) scale(0.01172,-0.01172)" d="M763 0 H583 V1147 Q518 1085 412 1023 Q306 961 223 930 V1104 Q373 1175 486 1276 Q599 1377 646 1466 H763 Z" fill="#000"/><text x="775.65" y="518" font-size="24" fill="#000">0</text><text x="871.65" y="518" font-size="24" fill="#000">6</text><path transform="translate(967.65,518) scale(0.01172,-0.01172)" d="M763 0 H583 V1147 Q518 1085 412 1023 Q306 961 223 930 V1104 Q373 1175 486 1276 Q599 1377 646 1466 H763 Z" fill="#000"/><text x="43.46" y="549" font-size="24" fill="#000" textLength="31.24" lengthAdjust="spacingAndGlyphs">R3</text><text x="295.65" y="549" font-size="24" fill="#000">0</text><text x="391.65" y="549" font-size="24" fill="#000">0</text><text x="487.65" y="549" font-size="24" fill="#000">0</text><path transform="translate(583.65,549) scale(0.01172,-0.01172)" d="M763 0 H583 V1147 Q518 1085 412 1023 Q306 961 223 930 V1104 Q373 1175 486 1276 Q599 1377 646 1466 H763 Z" fill="#000"/><path transform="translate(679.65,549) scale(0.01172,-0.01172)" d="M763 0 H583 V1147 Q518 1085 412 1023 Q306 961 223 930 V1104 Q373 1175 486 1276 Q599 1377 646 1466 H763 Z" fill="#000"/><text x="775.65" y="549" font-size="24" fill="#000">2</text><text x="871.65" y="549" font-size="24" fill="#000">2</text><text x="967.65" y="549" font-size="24" fill="#000">2</text><text x="202.11" y="1003" font-size="36.3" fill="#000">0</text><text x="202.11" y="957" font-size="36.3" fill="#000">2</text><text x="202.11" y="911" font-size="36.3" fill="#000">4</text><text x="202.11" y="865" font-size="36.3" fill="#000">6</text><text x="202.11" y="819" font-size="36.3" fill="#000">8</text><path transform="translate(181.92,773) scale(0.01772,-0.01772)" d="M763 0 H583 V1147 Q518 1085 412 1023 Q306 961 223 930 V1104 Q373 1175 486 1276 Q599 1377 646 1466 H763 Z" fill="#000"/><text x="202.11" y="773" font-size="36.3" fill="#000">0</text><path transform="translate(181.92,727) scale(0.01772,-0.01772)" d="M763 0 H583 V1147 Q518 1085 412 1023 Q306 961 223 930 V1104 Q373 1175 486 1276 Q599 1377 646 1466 H763 Z" fill="#000"/><text x="202.11" y="727" font-size="36.3" fill="#000">2</text><path transform="translate(181.92,681) scale(0.01772,-0.01772)" d="M763 0 H583 V1147 Q518 1085 412 1023 Q306 961 223 930 V1104 Q373 1175 486 1276 Q599 1377 646 1466 H763 Z" fill="#000"/><text x="202.11" y="681" font-size="36.3" fill="#000">4</text><path transform="translate(181.92,634) scale(0.01772,-0.01772)" d="M763 0 H583 V1147 Q518 1085 412 1023 Q306 961 223 930 V1104 Q373 1175 486 1276 Q599 1377 646 1466 H763 Z" fill="#000"/><text x="202.11" y="634" font-size="36.3" fill="#000">6</text><text x="283.59" y="1045" font-size="36.3">M</text><path transform="translate(313.82,1045) scale(0.01772,-0.01772)" d="M763 0 H583 V1147 Q518 1085 412 1023 Q306 961 223 930 V1104 Q373 1175 486 1276 Q599 1377 646 1466 H763 Z" fill="#000"/><text x="394.59" y="1045" font-size="36.3">M</text><text x="424.82" y="1045" font-size="36.3" fill="#000">2</text><text x="506.59" y="1045" font-size="36.3">M</text><text x="536.82" y="1045" font-size="36.3" fill="#000">3</text><text x="617.59" y="1045" font-size="36.3">M</text><text x="647.82" y="1045" font-size="36.3" fill="#000">4</text><text x="729.59" y="1045" font-size="36.3">M</text><text x="759.82" y="1045" font-size="36.3" fill="#000">5</text><text x="840.59" y="1045" font-size="36.3">M</text><text x="870.82" y="1045" font-size="36.3" fill="#000">6</text><text x="952.59" y="1045" font-size="36.3">M</text><text x="982.82" y="1045" font-size="36.3" fill="#000">7</text><text x="1063.59" y="1045" font-size="36.3">M</text><text x="1093.82" y="1045" font-size="36.3" fill="#000">8</text><text x="1185.36" y="685.9" font-size="33" fill="#000" textLength="41.30" lengthAdjust="spacingAndGlyphs">R3</text><text x="1185.79" y="792.7" font-size="33" fill="#000" textLength="40.86" lengthAdjust="spacingAndGlyphs">R2</text><text x="1185.64" y="898.9" font-size="33" fill="#000" textLength="166.90" lengthAdjust="spacingAndGlyphs">Contractors</text><text x="1185.77" y="1006" font-size="33" fill="#000" textLength="159.47" lengthAdjust="spacingAndGlyphs">Employees</text><text transform="translate(114.7,961.04) rotate(-90)" x="0" y="0" font-size="36.5" font-weight="bold" textLength="298.10" lengthAdjust="spacingAndGlyphs">Number of People</text><text x="683.05" y="1099" font-size="29" font-weight="bold" fill="#000" textLength="84.66" lengthAdjust="spacingAndGlyphs">Month</text><text x="129.37" y="1154" font-size="20.5" font-weight="bold" fill="#217346" textLength="64.03" lengthAdjust="spacingAndGlyphs">Sheet1</text><text x="220.11" y="1154" font-size="20.5" fill="#444" textLength="60.36" lengthAdjust="spacingAndGlyphs">Sheet2</text><text x="308.60" y="1154" font-size="20.5" fill="#444" textLength="60.62" lengthAdjust="spacingAndGlyphs">Sheet3</text><text x="15.27" y="1188.75" font-size="15.5" fill="#444" textLength="42.83" lengthAdjust="spacingAndGlyphs">Ready</text><text x="1868.69" y="1189.2" font-size="15.5" fill="#444" textLength="39.97" lengthAdjust="spacingAndGlyphs">100%</text></svg>
</body></html>
